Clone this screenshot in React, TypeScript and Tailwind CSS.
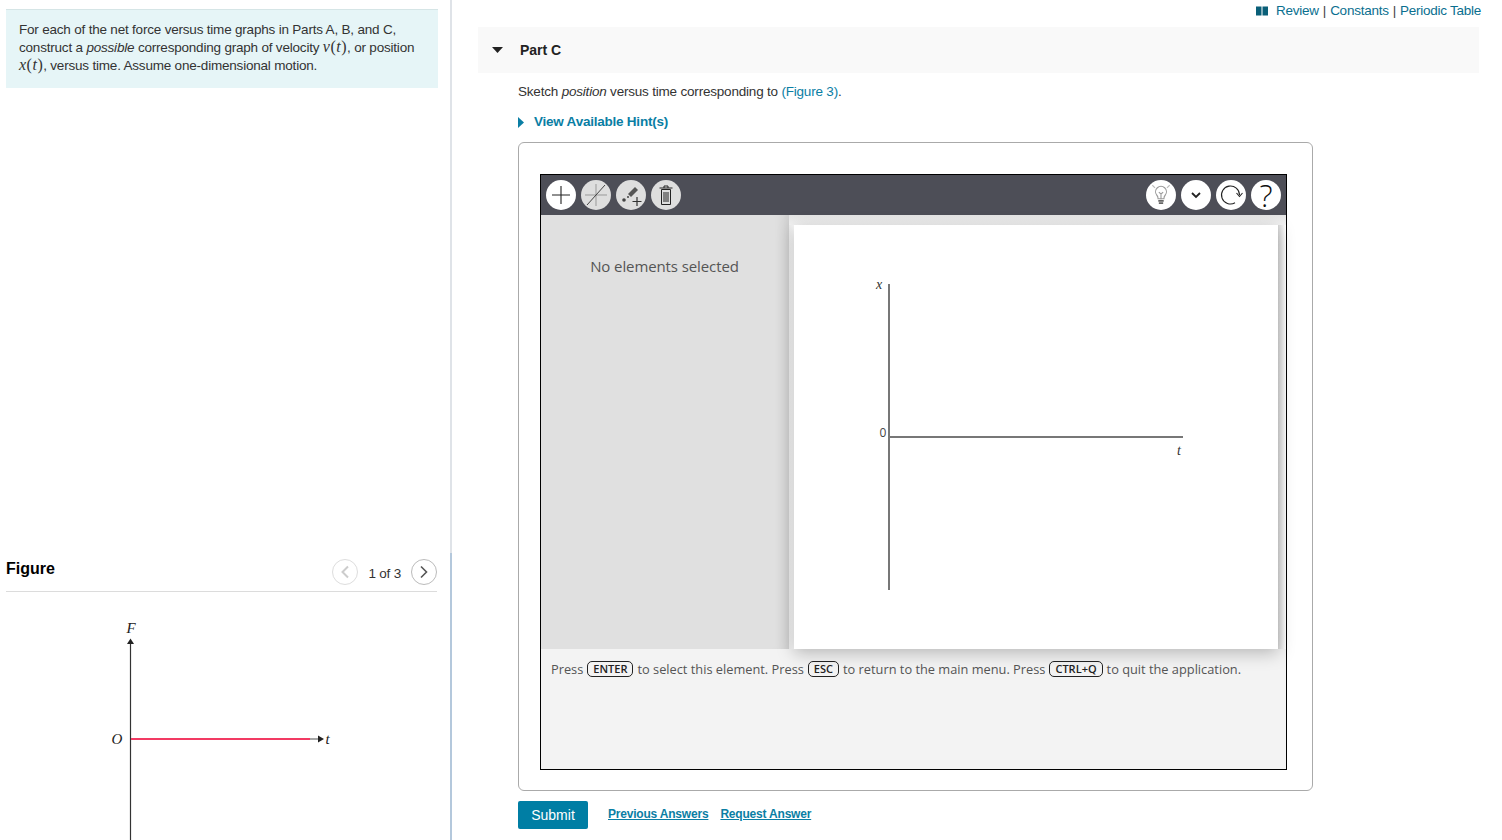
import React from "react";

const Italic = ({ children }: { children: React.ReactNode }) => (
  <span className="italic font-['Liberation_Serif',serif] text-[16px] leading-none tracking-[0.5px] text-[#333]">{children}</span>
);

const Paren = ({ children }: { children: React.ReactNode }) => (
  <span className="font-['Liberation_Serif',serif] text-[16px] leading-none tracking-[0.5px] text-[#333]">{children}</span>
);

const Key = ({ children }: { children: React.ReactNode }) => (
  <span className="inline-block border-[1.5px] border-[#222] rounded-[5px] px-[5px] h-[16px] leading-[13px] text-[11px] font-semibold text-[#222] align-[1px] mx-[4px]">
    {children}
  </span>
);

const ToolBtn = ({ children, bg }: { children: React.ReactNode; bg: string }) => (
  <div className={`w-[30px] h-[30px] rounded-full flex items-center justify-center ${bg}`}>{children}</div>
);

function Left() {
  return (
    <div className="w-[452px] h-[840px] shrink-0 flex flex-col pl-[6px] pr-[12px] pt-[9px] border-r-2 border-[#dfe3e8] relative">
      <div className="absolute right-[-2px] top-[553px] bottom-0 w-[2px] bg-[#b4c8dc]" />
      <div className="bg-[#e6f5f7] border-t border-[#d5e5e6] h-[79px] px-[13px] pt-[11px] text-[13.5px] tracking-[-0.2px] leading-[17.5px] text-[#333] whitespace-nowrap">
        <div>For each of the net force versus time graphs in Parts A, B, and C,</div>
        <div>
          construct a <em>possible</em> corresponding graph of velocity <Italic>v</Italic>
          <Paren>(</Paren><Italic>t</Italic><Paren>)</Paren>, or position
        </div>
        <div className="mt-[1px]">
          <Italic>x</Italic>
          <Paren>(</Paren><Italic>t</Italic><Paren>)</Paren>, versus time. Assume one-dimensional motion.
        </div>
      </div>
      <div className="mt-[470px] h-[34px] flex items-start justify-between border-b border-[#dcdcdc] mr-[1px]">
        <div className="text-[16px] font-bold text-black leading-[20px] mt-[1px]">Figure</div>
        <div className="flex items-center mt-[1px] text-[13.5px] tracking-[-0.2px] text-[#333]">
          <div className="w-[26px] h-[26px] rounded-full border border-[#ddd] flex items-center justify-center">
            <svg width="10" height="14" viewBox="0 0 10 14" fill="none" stroke="#ccc" strokeWidth="2"><path d="M8 1.500 2.500 7 8 12.500" /></svg>
          </div>
          <span className="mx-[10px] mt-[4px]">1 of 3</span>
          <div className="w-[26px] h-[26px] rounded-full border border-[#bbb] flex items-center justify-center">
            <svg width="10" height="14" viewBox="0 0 10 14" fill="none" stroke="#555" strokeWidth="1.600"><path d="M2 1.500 7.500 7 2 12.500" /></svg>
          </div>
        </div>
      </div>
      <svg width="432" height="248" viewBox="0 0 432 248" className="block">
        <g transform="translate(-6 -592)">
          <text x="131" y="633" textAnchor="middle" fontFamily="Liberation Serif" fontStyle="italic" fontSize="15" fill="#222">F</text>
          <path d="M130.500 642V840" stroke="#333" strokeWidth="1.200" />
          <path d="M130.500 638.500 134 644H127Z" fill="#222" />
          <text x="117" y="744" textAnchor="middle" fontFamily="Liberation Serif" fontStyle="italic" fontSize="15" fill="#222">O</text>
          <path d="M310 739H320" stroke="#888" strokeWidth="1.500" />
          <path d="M131 739H310" stroke="#f23a63" strokeWidth="2" />
          <path d="M324 739 318 735.500V742.500Z" fill="#222" />
          <text x="327.500" y="744" textAnchor="middle" fontFamily="Liberation Serif" fontStyle="italic" fontSize="15" fill="#222">t</text>
        </g>
      </svg>
    </div>
  );
}

function Tool() {
  return (
    <div className="w-[747px] h-[596px] border border-black flex flex-col font-['Open_Sans',sans-serif]">
      <div className="h-[40px] bg-[#4d4e57] flex items-center justify-between pl-[5px] pr-[5px] shrink-0">
        <div className="flex gap-[5px]">
          <ToolBtn bg="bg-white">
            <svg width="20" height="20" viewBox="0 0 20 20" stroke="#222" strokeWidth="1.100"><path d="M10 1V19M1 10H19" /></svg>
          </ToolBtn>
          <ToolBtn bg="bg-[#dedede]">
            <svg width="26" height="26" viewBox="0 0 26 26" fill="none" strokeWidth="1"><path d="M13 2V24M2 13H24" stroke="#999" /><path d="M4 23 22 3" stroke="#444" /></svg>
          </ToolBtn>
          <ToolBtn bg="bg-[#dedede]">
            <svg width="26" height="26" viewBox="0 0 26 26">
              <path d="M10 12 17 5 20 8 13 15Z" fill="#555" />
              <circle cx="6" cy="18" r="1.800" fill="#444" />
              <circle cx="10" cy="15" r="1" fill="#444" />
              <path d="M19 15V24M14.500 19.500H23.500" stroke="#333" strokeWidth="1.200" />
            </svg>
          </ToolBtn>
          <ToolBtn bg="bg-[#dedede]">
            <svg width="20" height="22" viewBox="0 0 20 22" fill="none" stroke="#222" strokeWidth="1">
              <path d="M5.500 5.500H14.500V20.500H5.500Z" />
              <path d="M3.500 4H16.500M8 4V2H12V4" />
              <path d="M8 8V18M10 8V18M12 8V18" />
            </svg>
          </ToolBtn>
        </div>
        <div className="flex gap-[5px]">
          <ToolBtn bg="bg-white">
            <svg width="26" height="26" viewBox="0 0 24 24" fill="none" stroke="#999" strokeWidth="1">
              <path d="M8 12a5 5 0 1 1 8 0c-1 1-1.300 2-1.300 3.500h-5.400C9.300 14 9 13 8 12Z" />
              <path d="M9.500 17.500h5M10 19.500h4" strokeWidth="1.600" stroke="#666" />
              <path d="M12 16V11M10 9.500 12 11 14 9.500" />
              <path d="M4 3l2.500 2.500M20 3l-2.500 2.500" stroke="#bbb" />
            </svg>
          </ToolBtn>
          <ToolBtn bg="bg-white">
            <svg width="12" height="12" viewBox="0 0 12 12" fill="none" stroke="#222" strokeWidth="1.800"><path d="M2 4 6 8 10 4" /></svg>
          </ToolBtn>
          <ToolBtn bg="bg-white">
            <svg width="24" height="24" viewBox="0 0 24 24" fill="none" stroke="#222" strokeWidth="1.100">
              <path d="M16 19.800A9 9 0 1 1 20.500 12" />
              <path d="M17.500 10 20.500 13.500 23.500 10" />
            </svg>
          </ToolBtn>
          <ToolBtn bg="bg-white">
            <span className="text-[31px] leading-none text-[#111] font-['Open_Sans',sans-serif] font-light">?</span>
          </ToolBtn>
        </div>
      </div>
      <div className="h-[434px] flex shrink-0 bg-[#e0e0e0]">
        <div className="w-[248px] shrink-0 text-center pt-[40px] text-[15px] tracking-[-0.1px] leading-[22px] text-[#555] pr-[1px] shadow-[inset_-14px_0_14px_-12px_rgba(0,0,0,0.12)]">
          No elements selected
        </div>
        <div className="flex-1 bg-white">
          <div className="h-full flex flex-col bg-[#e0e0e0]">
            <div className="h-[10px] bg-gradient-to-b from-[#e4e4e4] to-[#f4f4f4] shrink-0" />
            <div className="flex-1 flex bg-white">
              <div className="w-[5px] shrink-0 bg-gradient-to-r from-[#ededed] to-[#fafafa]" />
              <div className="w-[484px] shrink-0 bg-white shadow-[0_4px_16px_rgba(0,0,0,0.25)] relative z-10">
                <svg width="484" height="424" viewBox="0 0 484 424" className="block">
                  <g transform="translate(-794 -225)">
                    <text x="879" y="289" textAnchor="middle" fontFamily="Liberation Serif" fontStyle="italic" fontSize="14" fill="#333">x</text>
                    <path d="M889 284V590" stroke="#777" strokeWidth="2" />
                    <text x="883" y="437" textAnchor="middle" fontFamily="Open Sans" fontSize="12" fill="#444">0</text>
                    <path d="M889 437H1183" stroke="#777" strokeWidth="2" />
                    <text x="1179" y="455" textAnchor="middle" fontFamily="Liberation Serif" fontStyle="italic" fontSize="14" fill="#333">t</text>
                  </g>
                </svg>
              </div>
              <div className="flex-1 bg-gradient-to-r from-[#d8d8d8] to-white" />
            </div>
          </div>
        </div>
      </div>
      <div className="flex-1 bg-[#f3f3f3] pl-[10px] pt-[11px] text-[12.8px] leading-[19px] text-[#555] whitespace-nowrap">
        Press<Key>ENTER</Key>to select this element. Press<Key>ESC</Key>to return to the main menu. Press<Key>CTRL+Q</Key>to quit the application.
      </div>
    </div>
  );
}

function Right() {
  return (
    <div className="flex-1 pl-[26px] pr-[23px] flex flex-col">
      <div className="h-[27px] shrink-0 flex justify-end items-start pt-[2px] text-[13.5px] tracking-[-0.25px] leading-[18px] text-[#0a6f8f] -mr-[2px] whitespace-nowrap">
        <svg width="12" height="10" viewBox="0 0 12 10" fill="#0a5f78" className="mt-[4px] mr-[8px]">
          <path d="M0 0.500H5.500V9.500H0ZM6.500 0.500H12V9.500H6.500Z" />
        </svg>
        <span>Review</span><span className="text-[#444] mx-[4px]">|</span><span>Constants</span><span className="text-[#444] mx-[4px]">|</span><span>Periodic Table</span>
      </div>
      <div className="h-[46px] shrink-0 bg-[#f9f9f9] flex items-center pl-[14px] font-bold text-[14px] text-[#222]">
        <svg width="11" height="6" viewBox="0 0 11 6" fill="#222" className="mr-[17px]"><path d="M0 0H11L5.500 6Z" /></svg>
        Part C
      </div>
      <div className="pl-[40px] flex flex-col">
        <div className="mt-[9px] h-[20px] text-[13.5px] tracking-[-0.2px] leading-[20px] text-[#333]">
          Sketch <em>position</em> versus time corresponding to <span className="text-[#0a7ea4]">(Figure 3)</span>.
        </div>
        <div className="mt-[10px] h-[20px] flex items-center text-[13.5px] tracking-[-0.23px] font-bold text-[#0a7ea4]">
          <svg width="6" height="11" viewBox="0 0 6 11" fill="#0a7ea4" className="mr-[10px]"><path d="M0 0 6 5.500 0 11Z" /></svg>
          View Available Hint(s)
        </div>
        <div className="mt-[10px] w-[795px] h-[649px] border border-[#aaa] rounded-[6px] pl-[21px] pt-[31px]">
          <Tool />
        </div>
        <div className="mt-[10px] flex items-start">
          <div className="w-[70px] h-[28px] bg-[#007ea4] rounded-[2px] text-white text-[14px] flex items-center justify-center">Submit</div>
          <span className="ml-[20px] mt-[4px] text-[12px] tracking-[-0.2px] font-bold leading-[18px] text-[#0a7ea4] underline">Previous Answers</span>
          <span className="ml-[12px] mt-[4px] text-[12px] tracking-[-0.2px] font-bold leading-[18px] text-[#0a7ea4] underline">Request Answer</span>
        </div>
      </div>
    </div>
  );
}

export default function App() {
  return (
    <div className="w-[1502px] h-[840px] overflow-hidden flex bg-white font-['Liberation_Sans',Arial,sans-serif]">
      <Left />
      <Right />
    </div>
  );
}
